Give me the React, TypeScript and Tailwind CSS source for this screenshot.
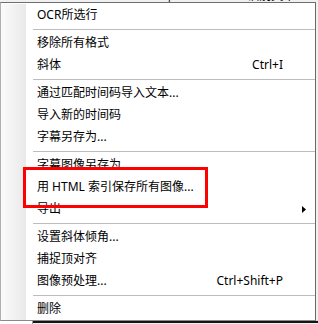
import React from "react";

type Item =
  | { kind: "sep" }
  | { kind: "item"; label: string; shortcut?: string; submenu?: boolean };

const items: Item[] = [
  { kind: "item", label: "OCR所选行" },
  { kind: "sep" },
  { kind: "item", label: "移除所有格式" },
  { kind: "item", label: "斜体", shortcut: "Ctrl+I" },
  { kind: "sep" },
  { kind: "item", label: "通过匹配时间码导入文本..." },
  { kind: "item", label: "导入新的时间码" },
  { kind: "item", label: "字幕另存为..." },
  { kind: "sep" },
  { kind: "item", label: "字幕图像另存为" },
  { kind: "item", label: "用 HTML 索引保存所有图像..." },
  { kind: "item", label: "导出", submenu: true },
  { kind: "sep" },
  { kind: "item", label: "设置斜体倾角..." },
  { kind: "item", label: "捕捉顶对齐" },
  { kind: "item", label: "图像预处理...", shortcut: "Ctrl+Shift+P" },
  { kind: "sep" },
  { kind: "item", label: "删除" },
];

export default function App() {
  return (
    <div
      className="relative h-[324px] w-[318px] overflow-hidden bg-[#f0f0f0] text-black"
      style={{ fontFamily: '"Noto Sans", "Noto Sans CJK SC", sans-serif' }}
    >
      {/* background window content peeking out */}
      <div className="flex h-full flex-col">
        <div className="-mt-[11px] flex h-[14px] items-center gap-[10px] pl-[166px] text-[12px] leading-none">
          <span>|</span>
          <span>士 二</span>
          <span>OCR 识别文本</span>
        </div>
        <div className="mt-auto flex h-[4px]">
          <div className="w-[32px] bg-white" />
          <div className="w-px bg-[#9a9a9a]" />
          <div className="flex flex-1 flex-col">
            <div className="h-px bg-[#d8d8d8]" />
            <div className="h-[2px] bg-[#151515]" />
          </div>
        </div>
      </div>

      {/* context menu */}
      <div className="absolute left-0 top-[2px] flex w-[316px] border border-l-[#b0b0b0] border-t-[#6e6e6e] border-r-[#6a6a6a] border-b-[#8a8a8a] bg-white pt-px">
        <div className="w-[25px] shrink-0 bg-gradient-to-r from-[#fbfbfb] to-[#e9e9e9]" />
        <div className="flex flex-1 flex-col">
          {items.map((it, i) =>
            it.kind === "sep" ? (
              <div key={i} className="flex h-[6px] items-center pl-[7px]">
                <div className="h-px flex-1 bg-[#bdbdbd]" />
              </div>
            ) : (
              <div key={i} className="flex h-[22px] items-center text-[12px] leading-none">
                <span className="flex-1 pl-[11px] whitespace-nowrap">{it.label}</span>
                {it.shortcut && <span className="whitespace-nowrap">{it.shortcut}</span>}
                <span className="flex w-[32px] shrink-0 items-center pl-[19px]">
                  {it.submenu && (
                    <svg width="4" height="7" viewBox="0 0 4 7">
                      <polygon points="0,0 4,3.5 0,7" fill="#000" />
                    </svg>
                  )}
                </span>
              </div>
            )
          )}
        </div>
      </div>

      {/* annotation box */}
      <div className="absolute left-[23px] top-[167px] h-[41px] w-[185px] border-[3px] border-[#ff0000]" />
    </div>
  );
}
